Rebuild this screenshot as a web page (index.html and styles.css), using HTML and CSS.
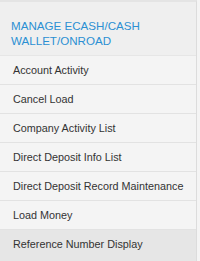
FILE: index.html
```html
<!DOCTYPE html>
<html>
<head>
<meta charset="utf-8">
<link rel="stylesheet" href="styles.css">
</head>
<body>
<nav class="menu">
  <div class="menu-title">MANAGE ECASH/CASH WALLET/ONROAD</div>
  <ul class="menu-list">
    <li class="menu-item">Account Activity</li>
    <li class="menu-item">Cancel Load</li>
    <li class="menu-item">Company Activity List</li>
    <li class="menu-item">Direct Deposit Info List</li>
    <li class="menu-item">Direct Deposit Record Maintenance</li>
    <li class="menu-item">Load Money</li>
    <li class="menu-item active">Reference Number Display</li>
  </ul>
</nav>
</body>
</html>
```
FILE: styles.css
```css
html, body {
  margin: 0;
  padding: 0;
  background: #f4f4f4;
}
.menu {
  width: 197px;
  height: 261px;
  box-sizing: border-box;
  border-top: 2px solid #e4e4e4;
  border-right: 1px solid #dcdcdc;
  font-family: "Liberation Sans", Arial, sans-serif;
  background: #f4f4f4;
}
.menu-title {
  background: #efefef;
  color: #2b8fd3;
  font-size: 11.6px;
  line-height: 15px;
  padding: 15.5px 8px 7.5px 11px;
  height: 30px;
  border-bottom: 1px solid #e6e6e6;
}
.menu-list {
  list-style: none;
  margin: 0;
  padding: 0;
}
.menu-item {
  height: 28px;
  line-height: 28px;
  padding-left: 13px;
  font-size: 10.8px;
  color: #333;
  border-bottom: 1px solid #e2e2e2;
  white-space: nowrap;
}
.menu-item.active {
  background: #e6e6e6;
  border-bottom: none;
  height: 31px;
}
```
